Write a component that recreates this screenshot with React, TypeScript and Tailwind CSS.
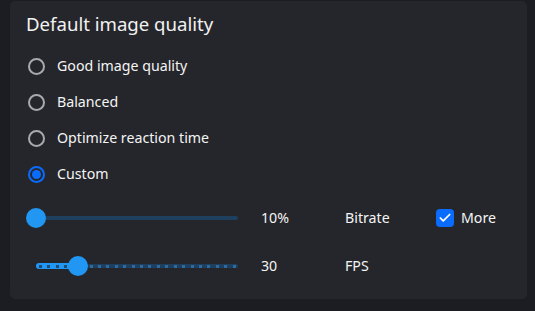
import { Check } from 'lucide-react';

const options = ['Good image quality', 'Balanced', 'Optimize reaction time', 'Custom'];

function Radio({ label, checked }: { label: string; checked?: boolean }) {
  return (
    <div className="flex items-center h-[36px]">
      <div className="w-[36px] flex justify-center">
        <span
          className={
            checked
              ? 'w-[17px] h-[17px] rounded-full border-2 border-[#0a6cff] flex items-center justify-center'
              : 'w-[17px] h-[17px] rounded-full border-2 border-[#a9aaad]'
          }
        >
          {checked && <span className="w-[9px] h-[9px] rounded-full bg-[#0a6cff]" />}
        </span>
      </div>
      <span className="ml-[3px] text-[14.2px] text-[#f4f4f4]">{label}</span>
    </div>
  );
}

function Slider({ pct, stepped }: { pct: number; stepped?: boolean }) {
  const dots = Array.from({ length: 24 });
  return (
    <div className="relative w-[222px] h-[24px] flex items-center">
      {/* track */}
      <div className="absolute left-[10px] right-[10px] h-[4px] rounded-full bg-[#1f3f5e]" />
      {stepped && (
        <div
          className="absolute left-[10px] h-[6px] rounded-full bg-[#2196f3]"
          style={{ width: `${(202 * pct) / 100}px` }}
        />
      )}
      {stepped && (
        <div className="absolute left-[13px] right-[12px] flex justify-between items-center">
          {dots.map((_, i) => (
            <span
              key={i}
              className={
                (i * 202) / 23 < (202 * pct) / 100
                  ? 'w-[3px] h-[3px] bg-[#1a4c7a]'
                  : 'w-[3px] h-[3px] bg-[#2e6a9e]'
              }
            />
          ))}
        </div>
      )}
      <div
        className="absolute w-[20px] h-[20px] rounded-full bg-[#2196f3]"
        style={{ left: `${(202 * pct) / 100}px` }}
      />
    </div>
  );
}

export default function App() {
  return (
    <div
      className="w-[535px] h-[311px] bg-[#1c1d22] pt-[1px] pl-[10px]"
      style={{ fontFamily: '"Noto Sans", "Open Sans", sans-serif' }}
    >
      <div className="w-[517px] h-[298px] rounded-[5px] bg-[#25262b] pl-[16px] pt-[8px]">
        <h1 className="text-[18.6px] text-[#f2f2f2] leading-[30px]">Default image quality</h1>
        <div className="mt-[9px] -ml-[8px] flex flex-col">
          {options.map((o) => (
            <Radio key={o} label={o} checked={o === 'Custom'} />
          ))}
        </div>
        <div className="mt-[14px] flex items-center text-[14.2px] text-[#f4f4f4]">
          <Slider pct={0} />
          <span className="ml-[13px] w-[84px]">10%</span>
          <span className="w-[91px]">Bitrate</span>
          <span className="w-[18px] h-[18px] rounded-[4px] bg-[#0a6cff] flex items-center justify-center">
            <Check className="w-[14px] h-[14px] text-white" strokeWidth={3} />
          </span>
          <span className="ml-[7px]">More</span>
        </div>
        <div className="mt-[24px] flex items-center text-[14.2px] text-[#f4f4f4]">
          <Slider pct={21} stepped />
          <span className="ml-[13px] w-[84px]">30</span>
          <span>FPS</span>
        </div>
      </div>
    </div>
  );
}
